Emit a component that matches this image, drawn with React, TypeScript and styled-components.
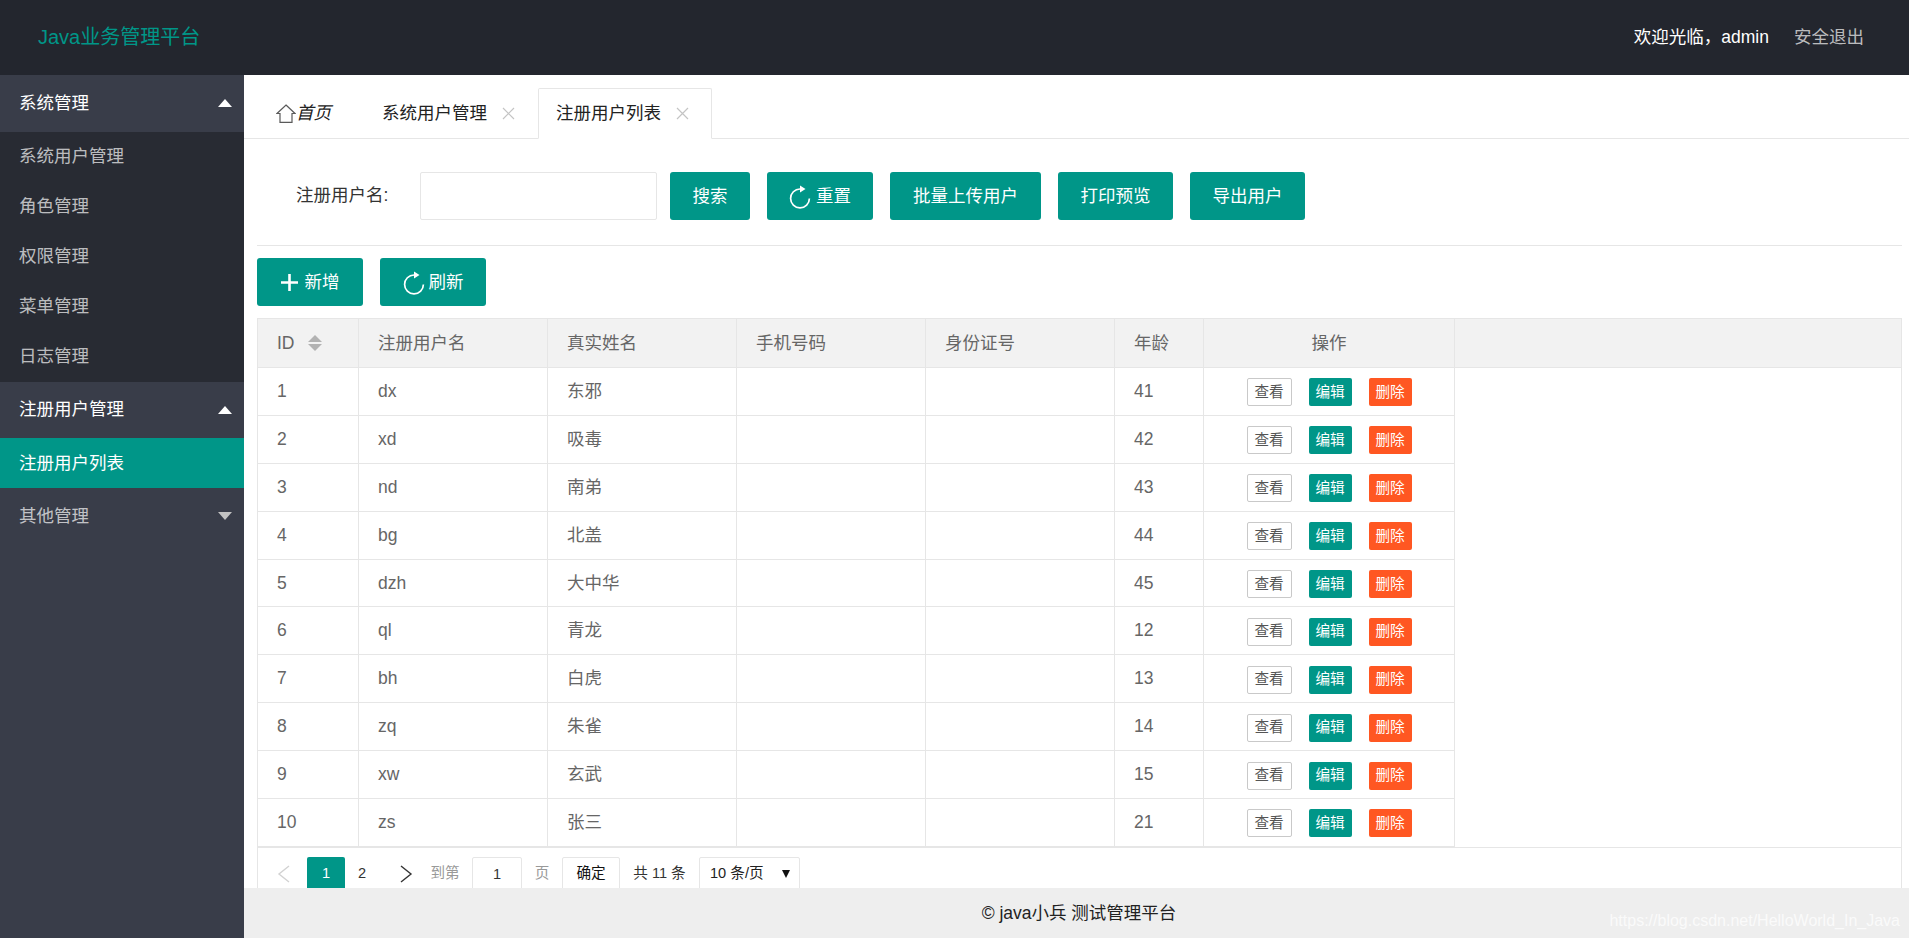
import * as React from 'react';
import styled, { createGlobalStyle } from 'styled-components';

type User = { id: number; name: string; real: string; age: number };

const users: User[] = [
  { id: 1, name: 'dx', real: '东邪', age: 41 },
  { id: 2, name: 'xd', real: '吸毒', age: 42 },
  { id: 3, name: 'nd', real: '南弟', age: 43 },
  { id: 4, name: 'bg', real: '北盖', age: 44 },
  { id: 5, name: 'dzh', real: '大中华', age: 45 },
  { id: 6, name: 'ql', real: '青龙', age: 12 },
  { id: 7, name: 'bh', real: '白虎', age: 13 },
  { id: 8, name: 'zq', real: '朱雀', age: 14 },
  { id: 9, name: 'xw', real: '玄武', age: 15 },
  { id: 10, name: 'zs', real: '张三', age: 21 },
];

const menu = ['系统用户管理', '角色管理', '权限管理', '菜单管理', '日志管理'];

const GREEN = '#009688';
const LINE = '#e6e6e6';
const COLUMNS = '101px 189px 189px 189px 189px 89px 251px';

const GlobalStyle = createGlobalStyle`
  html, body {
    margin: 0;
    height: 100%;
    overflow: hidden;
    font-family: "Liberation Sans", "Noto Sans CJK SC", sans-serif;
    font-size: 17.5px;
    line-height: 21px;
    color: #666;
    background: #fff;
  }
  #root {
    height: 100%;
  }
  * {
    box-sizing: border-box;
  }
`;

const Page = styled.div`
  display: flex;
  flex-direction: column;
  height: 100%;
`;

const TopBar = styled.header`
  flex: none;
  height: 75px;
  display: flex;
  align-items: center;
  justify-content: space-between;
  padding: 0 45px 1px 38px;
  background: #23262e;
`;

const Logo = styled.div`
  font-size: 20px;
  color: ${GREEN};
`;

const UserBox = styled.div`
  display: flex;
  gap: 25px;
`;

const Welcome = styled.span`
  color: #fff;
`;

const Logout = styled.a`
  color: rgba(255, 255, 255, 0.7);
`;

const Body = styled.div`
  flex: 1;
  min-height: 0;
  display: flex;
`;

const Sidebar = styled.nav`
  flex: none;
  width: 244px;
  background: #393d49;
`;

const MenuHead = styled.div<{ $dim?: boolean }>`
  height: 56.5px;
  display: flex;
  align-items: center;
  justify-content: space-between;
  padding: 0 12px 0 19px;
  color: ${(p) => (p.$dim ? 'rgba(255,255,255,.7)' : '#fff')};
`;

const Caret = styled.i<{ $open?: boolean }>`
  width: 0;
  height: 0;
  border-left: 7.5px solid transparent;
  border-right: 7.5px solid transparent;
  border-bottom: ${(p) => (p.$open ? '8px solid #fff' : '0')};
  border-top: ${(p) => (p.$open ? '0' : '8px solid #c2c2c2')};
`;

const MenuItem = styled.div<{ $active?: boolean }>`
  height: 50px;
  display: flex;
  align-items: center;
  padding-left: 19px;
  background: ${(p) => (p.$active ? GREEN : '#282b33')};
  color: ${(p) => (p.$active ? '#fff' : 'rgba(255,255,255,.7)')};
`;

const Main = styled.main`
  flex: 1;
  min-width: 0;
  display: flex;
  flex-direction: column;
`;

const Content = styled.div`
  flex: 1;
  min-height: 0;
  display: flex;
  flex-direction: column;
  overflow: hidden;
`;

const TabBar = styled.div`
  flex: none;
  height: 64px;
  display: flex;
  align-items: flex-end;
  padding-left: 13px;
  border-bottom: 1px solid ${LINE};
`;

const Tab = styled.div<{ $active?: boolean }>`
  height: 51px;
  display: flex;
  align-items: center;
  padding: 0 22px 0 17px;
  margin-bottom: -1px;
  color: #222;
  border: 1px solid ${(p) => (p.$active ? LINE : 'transparent')};
  border-bottom-color: ${(p) => (p.$active ? '#fff' : 'transparent')};
  border-radius: 2px 2px 0 0;
  background: ${(p) => (p.$active ? '#fff' : 'transparent')};
`;

const HomeTab = styled(Tab)`
  width: 107px;
  padding: 0 0 0 18px;
  font-style: italic;
`;

const TabClose = styled.svg`
  margin-left: 15px;
  flex: none;
`;

const SearchRow = styled.div`
  flex: none;
  height: 107px;
  margin: 0 7px 0 13px;
  padding: 33px 0 0 39px;
  display: flex;
  align-items: flex-start;
  border-bottom: 1px solid ${LINE};
`;

const SearchLabel = styled.label`
  flex: none;
  width: 94px;
  height: 48px;
  line-height: 47px;
  margin-right: 30px;
  color: #333;
`;

const SearchInput = styled.input`
  width: 237px;
  height: 48px;
  margin-right: 13px;
  border: 1px solid ${LINE};
  border-radius: 2px;
  background: #fff;
  outline: none;
`;

const Button = styled.button<{ $w: number }>`
  flex: none;
  width: ${(p) => p.$w}px;
  height: 48px;
  display: flex;
  align-items: center;
  justify-content: center;
  padding: 0;
  border: 0;
  border-radius: 3px;
  background: ${GREEN};
  color: #fff;
  font: inherit;

  & + & {
    margin-left: 17px;
  }
`;

const IconLabel = styled.span<{ $gap: number }>`
  display: flex;
  align-items: center;
  gap: ${(p) => p.$gap}px;
  padding-top: 1px;
`;

const Toolbar = styled.div`
  flex: none;
  display: flex;
  margin: 12px 0 12px 13px;

  & > * + * {
    margin-left: 18px;
  }
`;

const TableBox = styled.div`
  flex: 1;
  min-height: 0;
  margin: 0 7px 0 13px;
  border: 1px solid ${LINE};
  border-bottom: 0;
  overflow: hidden;
`;

const HeadRow = styled.div`
  height: 49px;
  display: grid;
  grid-template-columns: ${COLUMNS};
  background: #f2f2f2;
  border-bottom: 1px solid ${LINE};
`;

const Row = styled.div`
  height: 47.9px;
  width: 1197px;
  display: grid;
  grid-template-columns: ${COLUMNS};
  border-bottom: 1px solid ${LINE};

  &:last-of-type {
    height: 46.9px;
    border-bottom: 0;
  }
`;

const Cell = styled.div<{ $center?: boolean }>`
  display: flex;
  align-items: center;
  justify-content: ${(p) => (p.$center ? 'center' : 'flex-start')};
  padding: 0 ${(p) => (p.$center ? '0' : '19px')};
  border-right: 1px solid ${LINE};
  white-space: nowrap;
`;

const SortMark = styled.span`
  display: inline-flex;
  flex-direction: column;
  gap: 2px;
  margin-left: 13px;
  &::before,
  &::after {
    content: '';
    width: 0;
    height: 0;
    border-left: 7px solid transparent;
    border-right: 7px solid transparent;
  }
  &::before {
    border-bottom: 7px solid #b2b2b2;
  }
  &::after {
    border-top: 7px solid #b2b2b2;
  }
`;

const Actions = styled.div`
  width: 100%;
  display: flex;
  justify-content: center;
  gap: 17px;
  padding-top: 2px;
`;

const ActionButton = styled.button<{ $kind: 'plain' | 'edit' | 'danger' }>`
  width: ${(p) => (p.$kind === 'plain' ? 45 : 43)}px;
  height: 28px;
  padding: 0;
  font: inherit;
  font-size: 14.6px;
  border-radius: 2px;
  border: ${(p) => (p.$kind === 'plain' ? '1px solid #c9c9c9' : '0')};
  background: ${(p) =>
    p.$kind === 'plain' ? '#fff' : p.$kind === 'edit' ? GREEN : '#ff5722'};
  color: ${(p) => (p.$kind === 'plain' ? '#555' : '#fff')};
`;

const Pager = styled.div`
  height: 50px;
  display: flex;
  align-items: flex-start;
  padding-top: 9px;
  border-top: 1px solid ${LINE};
  font-size: 14.6px;
`;

const PagerChevron = styled.svg<{ $w: number }>`
  flex: none;
  width: ${(p) => p.$w}px;
  height: 34px;
`;

const PageNumber = styled.div<{ $active?: boolean }>`
  height: 34px;
  width: ${(p) => (p.$active ? 38 : 34)}px;
  display: flex;
  align-items: center;
  justify-content: center;
  border-radius: 2px;
  background: ${(p) => (p.$active ? GREEN : 'transparent')};
  color: ${(p) => (p.$active ? '#fff' : '#333')};
`;

const PagerText = styled.span<{ $dark?: boolean; $w: number }>`
  flex: none;
  width: ${(p) => p.$w}px;
  height: 34px;
  line-height: 32px;
  text-align: center;
  color: ${(p) => (p.$dark ? '#333' : '#999')};
`;

const PagerInput = styled.input`
  flex: none;
  width: 50px;
  height: 34px;
  text-align: center;
  font: inherit;
  color: #333;
  border: 1px solid ${LINE};
  border-radius: 2px;
  outline: none;
`;

const PagerConfirm = styled.button`
  flex: none;
  width: 58px;
  height: 34px;
  padding: 0;
  font: inherit;
  color: #111;
  background: #fff;
  border: 1px solid ${LINE};
  border-radius: 2px;
`;

const PagerSelect = styled.div`
  flex: none;
  width: 101px;
  height: 34px;
  display: flex;
  align-items: center;
  justify-content: space-between;
  padding: 0 9px 0 10px;
  color: #222;
  border: 1px solid ${LINE};
  border-radius: 2px;
  &::after {
    content: '';
    width: 0;
    height: 0;
    border-left: 4px solid transparent;
    border-right: 4px solid transparent;
    border-top: 8px solid #111;
  }
`;

const Footer = styled.footer`
  flex: none;
  position: relative;
  height: 50px;
  display: flex;
  align-items: center;
  justify-content: center;
  padding-left: 5px;
  background: #eee;
  color: #222;
`;

const Watermark = styled.span`
  position: absolute;
  right: 9px;
  top: 22px;
  font-size: 16px;
  color: rgba(255, 255, 255, 0.75);
`;

function RefreshIcon() {
  return (
    <svg width="22" height="24" viewBox="0 0 22 24" fill="none">
      <path d="M11 4 A9.4 9.4 0 1 0 20.4 13.4" stroke="#fff" strokeWidth="1.7" />
      <path d="M11 0.5 L16.5 4 L11 7.5 Z" fill="#fff" />
    </svg>
  );
}

function PlusIcon() {
  return (
    <svg width="17" height="17" viewBox="0 0 17 17">
      <path d="M7.2 0h2.6v7.2H17v2.6H9.8V17H7.2V9.8H0V7.2h7.2z" fill="#fff" />
    </svg>
  );
}

function HomeIcon() {
  return (
    <svg width="20" height="19" viewBox="0 0 20 19" fill="none">
      <path d="M10 1 L19 9.5 H16 V18.4 H4 V9.5 H1 Z" stroke="#5a5a5a" strokeWidth="1.2" />
    </svg>
  );
}

function CloseIcon() {
  return (
    <TabClose width="13" height="13" viewBox="0 0 13 13" fill="none">
      <path d="M1 1 L12 12 M12 1 L1 12" stroke="#c4c4c4" strokeWidth="1.2" />
    </TabClose>
  );
}

export default function App() {
  return (
    <Page>
      <GlobalStyle />
      <TopBar>
        <Logo>Java业务管理平台</Logo>
        <UserBox>
          <Welcome>欢迎光临，admin</Welcome>
          <Logout>安全退出</Logout>
        </UserBox>
      </TopBar>
      <Body>
        <Sidebar>
          <MenuHead>
            系统管理
            <Caret $open />
          </MenuHead>
          {menu.map((item) => (
            <MenuItem key={item}>{item}</MenuItem>
          ))}
          <MenuHead>
            注册用户管理
            <Caret $open />
          </MenuHead>
          <MenuItem $active>注册用户列表</MenuItem>
          <MenuHead $dim>
            其他管理
            <Caret />
          </MenuHead>
        </Sidebar>
        <Main>
          <Content>
            <TabBar>
              <HomeTab>
                <HomeIcon />
                首页
              </HomeTab>
              <Tab>
                系统用户管理
                <CloseIcon />
              </Tab>
              <Tab $active>
                注册用户列表
                <CloseIcon />
              </Tab>
            </TabBar>
            <SearchRow>
              <SearchLabel>注册用户名:</SearchLabel>
              <SearchInput />
              <Button $w={80}>搜索</Button>
              <Button $w={106}>
                <IconLabel $gap={5}>
                  <RefreshIcon />
                  重置
                </IconLabel>
              </Button>
              <Button $w={151}>批量上传用户</Button>
              <Button $w={115}>打印预览</Button>
              <Button $w={115}>导出用户</Button>
            </SearchRow>
            <Toolbar>
              <Button $w={106}>
                <IconLabel $gap={7}>
                  <PlusIcon />
                  新增
                </IconLabel>
              </Button>
              <Button $w={106}>
                <IconLabel $gap={4}>
                  <RefreshIcon />
                  刷新
                </IconLabel>
              </Button>
            </Toolbar>
            <TableBox>
              <HeadRow>
                <Cell>
                  ID
                  <SortMark />
                </Cell>
                <Cell>注册用户名</Cell>
                <Cell>真实姓名</Cell>
                <Cell>手机号码</Cell>
                <Cell>身份证号</Cell>
                <Cell>年龄</Cell>
                <Cell $center>操作</Cell>
              </HeadRow>
              {users.map((u) => (
                <Row key={u.id}>
                  <Cell>{u.id}</Cell>
                  <Cell>{u.name}</Cell>
                  <Cell>{u.real}</Cell>
                  <Cell />
                  <Cell />
                  <Cell>{u.age}</Cell>
                  <Cell $center>
                    <Actions>
                      <ActionButton $kind="plain">查看</ActionButton>
                      <ActionButton $kind="edit">编辑</ActionButton>
                      <ActionButton $kind="danger">删除</ActionButton>
                    </Actions>
                  </Cell>
                </Row>
              ))}
              <Pager>
                <PagerChevron $w={49} viewBox="0 0 49 34" fill="none">
                  <path d="M31 9 L21 17 L31 25" stroke="#d2d2d2" strokeWidth="1.4" />
                </PagerChevron>
                <PageNumber $active>1</PageNumber>
                <PageNumber>2</PageNumber>
                <PagerChevron $w={39} viewBox="0 0 39 34" fill="none">
                  <path d="M22 9 L32 17 L22 25" stroke="#333" strokeWidth="1.4" />
                </PagerChevron>
                <PagerText $w={54}>到第</PagerText>
                <PagerInput readOnly value="1" />
                <PagerText $w={40}>页</PagerText>
                <PagerConfirm>确定</PagerConfirm>
                <PagerText $dark $w={79}>共 11 条</PagerText>
                <PagerSelect>10 条/页</PagerSelect>
              </Pager>
            </TableBox>
          </Content>
          <Footer>
            © java小兵 测试管理平台
            <Watermark>https://blog.csdn.net/HelloWorld_In_Java</Watermark>
          </Footer>
        </Main>
      </Body>
    </Page>
  );
}
